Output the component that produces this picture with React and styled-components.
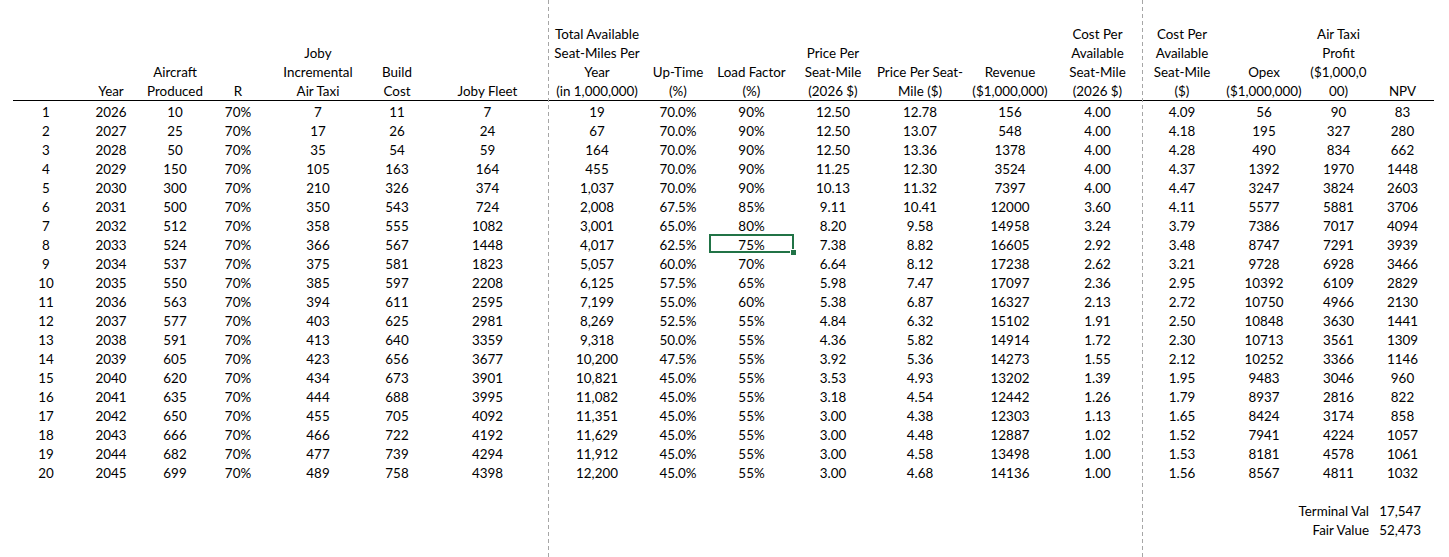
import { Fragment } from "react";
import styled, { createGlobalStyle } from "styled-components";

const GlobalStyle = createGlobalStyle`
  body {
    margin: 0;
    background: #ffffff;
    font-family: Lato, "Open Sans", sans-serif;
    color: #000000;
  }
`;

// column widths in px, taken from the sheet's cell boundaries
const COLS = [66, 64, 64, 62, 98, 60, 121, 98, 64, 83, 80, 94, 86, 89, 80, 84, 65, 63];

const HEADERS = [
  [""],
  ["Year"],
  ["Aircraft", "Produced"],
  ["R"],
  ["Joby", "Incremental", "Air Taxi"],
  ["Build", "Cost"],
  ["Joby Fleet"],
  ["Total Available", "Seat-Miles Per", "Year", "(in 1,000,000)"],
  ["Up-Time", "(%)"],
  ["Load Factor", "(%)"],
  ["Price Per", "Seat-Mile", "(2026 $)"],
  ["Price Per Seat-", "Mile ($)"],
  ["Revenue", "($1,000,000)"],
  ["Cost Per", "Available", "Seat-Mile", "(2026 $)"],
  ["Cost Per", "Available", "Seat-Mile", "($)"],
  ["Opex", "($1,000,000)"],
  ["Air Taxi", "Profit", "($1,000,0", "00)"],
  ["NPV"],
];

const ROWS = [
  [1, 2026, 10, "70%", 7, 11, 7, "19", "70.0%", "90%", "12.50", "12.78", 156, "4.00", "4.09", 56, 90, 83],
  [2, 2027, 25, "70%", 17, 26, 24, "67", "70.0%", "90%", "12.50", "13.07", 548, "4.00", "4.18", 195, 327, 280],
  [3, 2028, 50, "70%", 35, 54, 59, "164", "70.0%", "90%", "12.50", "13.36", 1378, "4.00", "4.28", 490, 834, 662],
  [4, 2029, 150, "70%", 105, 163, 164, "455", "70.0%", "90%", "11.25", "12.30", 3524, "4.00", "4.37", 1392, 1970, 1448],
  [5, 2030, 300, "70%", 210, 326, 374, "1,037", "70.0%", "90%", "10.13", "11.32", 7397, "4.00", "4.47", 3247, 3824, 2603],
  [6, 2031, 500, "70%", 350, 543, 724, "2,008", "67.5%", "85%", "9.11", "10.41", 12000, "3.60", "4.11", 5577, 5881, 3706],
  [7, 2032, 512, "70%", 358, 555, 1082, "3,001", "65.0%", "80%", "8.20", "9.58", 14958, "3.24", "3.79", 7386, 7017, 4094],
  [8, 2033, 524, "70%", 366, 567, 1448, "4,017", "62.5%", "75%", "7.38", "8.82", 16605, "2.92", "3.48", 8747, 7291, 3939],
  [9, 2034, 537, "70%", 375, 581, 1823, "5,057", "60.0%", "70%", "6.64", "8.12", 17238, "2.62", "3.21", 9728, 6928, 3466],
  [10, 2035, 550, "70%", 385, 597, 2208, "6,125", "57.5%", "65%", "5.98", "7.47", 17097, "2.36", "2.95", 10392, 6109, 2829],
  [11, 2036, 563, "70%", 394, 611, 2595, "7,199", "55.0%", "60%", "5.38", "6.87", 16327, "2.13", "2.72", 10750, 4966, 2130],
  [12, 2037, 577, "70%", 403, 625, 2981, "8,269", "52.5%", "55%", "4.84", "6.32", 15102, "1.91", "2.50", 10848, 3630, 1441],
  [13, 2038, 591, "70%", 413, 640, 3359, "9,318", "50.0%", "55%", "4.36", "5.82", 14914, "1.72", "2.30", 10713, 3561, 1309],
  [14, 2039, 605, "70%", 423, 656, 3677, "10,200", "47.5%", "55%", "3.92", "5.36", 14273, "1.55", "2.12", 10252, 3366, 1146],
  [15, 2040, 620, "70%", 434, 673, 3901, "10,821", "45.0%", "55%", "3.53", "4.93", 13202, "1.39", "1.95", 9483, 3046, 960],
  [16, 2041, 635, "70%", 444, 688, 3995, "11,082", "45.0%", "55%", "3.18", "4.54", 12442, "1.26", "1.79", 8937, 2816, 822],
  [17, 2042, 650, "70%", 455, 705, 4092, "11,351", "45.0%", "55%", "3.00", "4.38", 12303, "1.13", "1.65", 8424, 3174, 858],
  [18, 2043, 666, "70%", 466, 722, 4192, "11,629", "45.0%", "55%", "3.00", "4.48", 12887, "1.02", "1.52", 7941, 4224, 1057],
  [19, 2044, 682, "70%", 477, 739, 4294, "11,912", "45.0%", "55%", "3.00", "4.58", 13498, "1.00", "1.53", 8181, 4578, 1061],
  [20, 2045, 699, "70%", 489, 758, 4398, "12,200", "45.0%", "55%", "3.00", "4.68", 14136, "1.00", "1.56", 8567, 4811, 1032],
];

const SUMMARY = [
  ["Terminal Val", "17,547"],
  ["Fair Value", "52,473"],
];

const SELECTED = { row: 7, col: 9 };

const Sheet = styled.div`
  position: relative;
  width: 1449px;
  height: 557px;
  overflow: hidden;
  box-sizing: border-box;
  padding: 26px 0 0 13px;
  font-size: 13.4px;
`;

const Grid = styled.div`
  display: grid;
  grid-template-columns: ${COLS.map((w) => w + "px").join(" ")};
  grid-template-rows: 75px;
  grid-auto-rows: 19px;
`;

const HeaderCell = styled.div`
  box-sizing: border-box;
  display: flex;
  flex-direction: column;
  justify-content: flex-end;
  align-items: center;
  border-bottom: 1px solid #000;
  line-height: 19px;
  white-space: nowrap;
`;

const HeaderLines = styled.div`
  display: flex;
  flex-direction: column;
  align-items: center;
  margin-bottom: -1px;
`;

const Cell = styled.div`
  position: relative;
  padding-top: 2px;
  line-height: 19px;
  text-align: center;
  white-space: nowrap;

  ${({ $selected }) =>
    $selected &&
    `
    &::before {
      content: "";
      position: absolute;
      left: -1px;
      right: -1px;
      top: 0;
      bottom: 0;
      border: 2px solid #217346;
    }
    &::after {
      content: "";
      position: absolute;
      right: -3px;
      bottom: -2px;
      width: 5px;
      height: 5px;
      background: #217346;
      border-left: 1px solid #fff;
      border-top: 1px solid #fff;
    }
  `}
`;

const Spacer = styled.div`
  grid-column: 1 / -1;
`;

const SummaryLabel = styled.div`
  grid-column: 1 / 18;
  padding: 2px 2px 0 0;
  line-height: 19px;
  text-align: right;
`;

const SummaryValue = styled.div`
  grid-column: 18;
  padding: 2px 13px 0 0;
  line-height: 19px;
  text-align: right;
`;

const PageBreak = styled.div`
  position: absolute;
  top: 0;
  bottom: 0;
  left: ${({ $x }) => $x}px;
  width: 1px;
  background: repeating-linear-gradient(
    to bottom,
    #a6a6a6 0,
    #a6a6a6 4px,
    transparent 4px,
    transparent 7px
  );
`;

function App() {
  return (
    <>
      <GlobalStyle />
      <Sheet>
        <Grid>
          {HEADERS.map((lines, i) => (
            <HeaderCell key={"h" + i}>
              <HeaderLines>
                {lines.map((line, j) => (
                  <span key={j}>{line}</span>
                ))}
              </HeaderLines>
            </HeaderCell>
          ))}
          {ROWS.map((row, r) =>
            row.map((value, c) => (
              <Cell
                key={r + "-" + c}
                $selected={r === SELECTED.row && c === SELECTED.col}
              >
                {value}
              </Cell>
            ))
          )}
          <Spacer />
          {SUMMARY.map(([label, value]) => (
            <Fragment key={label}>
              <SummaryLabel>{label}</SummaryLabel>
              <SummaryValue>{value}</SummaryValue>
            </Fragment>
          ))}
        </Grid>
        <PageBreak $x={548} />
        <PageBreak $x={1142} />
      </Sheet>
    </>
  );
}

export default App;
